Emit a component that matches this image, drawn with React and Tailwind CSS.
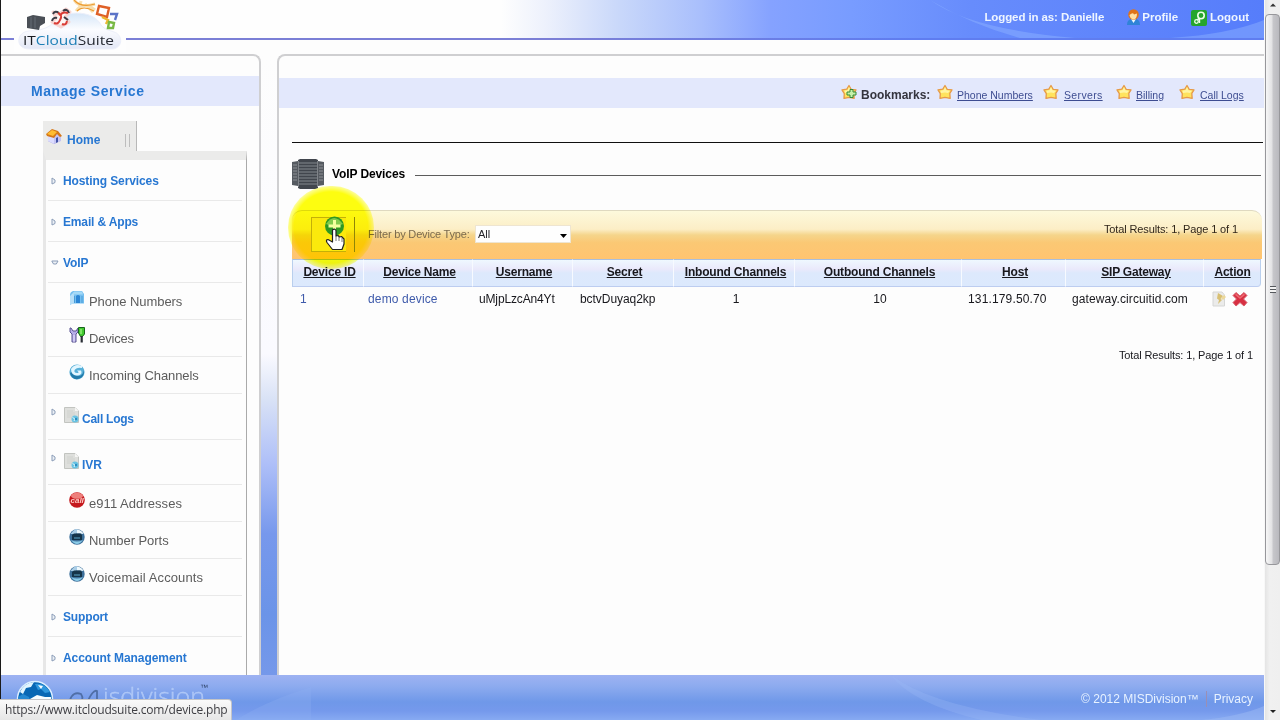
import React from "react";

const menuItems = [
  { label: "Hosting Services", type: "section", height: "h-[41px]", text: "tracking-[-0.1px]" },
  { label: "Email & Apps", type: "section", height: "h-[41px]", text: "tracking-[-0.15px]" },
  { label: "VoIP", type: "section", open: true, height: "h-[41px]", text: "tracking-[-0.1px]" },
  { label: "Phone Numbers", type: "link", icon: "phone", height: "h-[37px]", text: "tracking-[-0.05px]" },
  { label: "Devices", type: "link", icon: "tools", height: "h-[37px]", text: "tracking-[-0.2px]" },
  { label: "Incoming Channels", type: "link", icon: "swirl", height: "h-[37px]", text: "tracking-[-0.1px]" },
  { label: "Call Logs", type: "doc", height: "h-[46px]", text: "tracking-[-0.25px]" },
  { label: "IVR", type: "doc", height: "h-[45px]", text: "tracking-[-0.1px]" },
  { label: "e911 Addresses", type: "link", icon: "call", height: "h-[37px]", text: "tracking-[0.05px]" },
  { label: "Number Ports", type: "link", icon: "port", height: "h-[37px]", text: "tracking-[-0.05px]" },
  { label: "Voicemail Accounts", type: "link", icon: "port", height: "h-[37px]", text: "tracking-[0.12px]" },
  { label: "Support", type: "section", height: "h-[41px]", text: "tracking-[-0.15px]" },
  { label: "Account Management", type: "section", height: "h-[41px]", text: "tracking-[-0.05px]" },
];

const columns = [
  { label: "Device ID", width: "w-[72px]" },
  { label: "Device Name", width: "w-[109px]" },
  { label: "Username", width: "w-[100px]" },
  { label: "Secret", width: "w-[101px]" },
  { label: "Inbound Channels", width: "w-[121px]" },
  { label: "Outbound Channels", width: "w-[167px]" },
  { label: "Host", width: "w-[104px]" },
  { label: "SIP Gateway", width: "w-[138px]" },
  { label: "Action", width: "w-[57px]" },
];

const devices = [
  {
    id: "1",
    name: "demo device",
    username: "uMjpLzcAn4Yt",
    secret: "bctvDuyaq2kp",
    inbound: "1",
    outbound: "10",
    host: "131.179.50.70",
    gateway: "gateway.circuitid.com",
  },
];

function Logo() {
  return (
    <svg width="110" height="52" viewBox="0 0 110 52" className="block">
      <defs>
        <linearGradient id="cloud" x1="0" y1="0" x2="0" y2="1">
          <stop offset="0" stopColor="#d5e6f8" />
          <stop offset="0.45" stopColor="#fbfcff" />
          <stop offset="1" stopColor="#e3e7f5" />
        </linearGradient>
      </defs>
      <path
        d="M14 49C5 49 2 44 3 39C4 33 10 30 19 31C27 29 32 28 37 23C43 11 77 8 85 25C89 30 93 30 98 32C106 34 108 47 97 49Z"
        fill="url(#cloud)"
        stroke="#eceffa"
      />
      {/* server */}
      <path d="M11 17L17 15L29 17V23L24 26L23 30L11 28Z" fill="#4a4f56" />
      <path d="M15 17V28M19 17V28" stroke="#656c74" />
      {/* red knot */}
      <path
        d="M37 12L43 14L50 9L54 12L49 17L53 22L45 27L36 22L40 18Z"
        fill="#fdf5f3"
        stroke="#f7d5d2"
        strokeWidth="3"
        strokeLinejoin="round"
      />
      <path d="M37 14Q39 10 43 13M47 11Q51 8 53 13M36 21Q37 17 41 18M48 17L52 20" fill="none" stroke="#3b3c46" strokeWidth="2" />
      <path d="M42 13Q47 15 44 20Q42 25 38 23M52 13Q46 11 44 16M51 21Q50 26 46 24" fill="none" stroke="#d93c35" strokeWidth="2" />
      {/* ribbon */}
      <path d="M58 0Q64 9 79 4M60 11Q67 1 79 10M65 1L63 10M69 4L77 12" fill="none" stroke="#f8dfae" strokeWidth="3" />
      <path d="M58 0Q65 8 79 4M61 11Q67 5 78 11" fill="none" stroke="#ed9b32" strokeWidth="1.2" />
      {/* office squares */}
      <g fill="none" strokeWidth="2.4">
        <path d="M83 6L93 8L91 17L81 14Z" stroke="#df6026" />
        <path d="M94 14L101 14L99 20" stroke="#5c73c7" />
        <path d="M86 17L92 20L90 24" stroke="#edb832" />
        <path d="M92 28L93 22L98 23L97 28Z" stroke="#79b944" />
      </g>
      <text x="7" y="45" fontFamily="Open Sans, sans-serif" fontSize="13.5" textLength="91" lengthAdjust="spacingAndGlyphs">
        <tspan fill="#171a20">IT</tspan>
        <tspan fill="#1d7fb6">Cloud</tspan>
        <tspan fill="#262a33">Suite</tspan>
      </text>
    </svg>
  );
}

function HomeIcon() {
  return (
    <svg width="16" height="17" viewBox="0 0 16 17">
      <path d="M2 7V13L8 16L14 13V7L9 4Z" fill="#8f8bd6" />
      <path d="M2 8V13L8 16V9Z" fill="#dcdcff" />
      <path d="M8 9L11 5L15 8V13L8 16Z" fill="#c5c4f2" />
      <path d="M0 6L6 1L12 3L16 8L14 9L11 6L8 10L1 8Z" fill="#d57717" />
      <path d="M1 6L6 2L11 4L7 8Z" fill="#ffbd32" />
      <path d="M10 10L12 9V14L10 15Z" fill="#4253a5" />
    </svg>
  );
}

function Star({ plus }) {
  return (
    <svg width="17" height="17" viewBox="0 0 17 17" className="-mt-px shrink-0">
      <path
        d="M8 1.5L10.2 5.3L15 5.8L12.8 9.3L13.2 14.4L8 13.4L3 14.4L3.3 9.7L1 5.8L5.8 5.1Z"
        fill="#ffe35d"
        stroke="#e69a49"
        strokeWidth="1.3"
        strokeLinejoin="round"
      />
      <path d="M8 3L9.5 6.2L13 6.8L11 9L8 8.5L4 9L3.5 6.8L6.7 6Z" fill="#fff5a4" />
      {plus && (
        <path d="M9 5.5H12V8H15V11H12V13.5H9V11H6V8H9Z" fill="#c6f0a8" stroke="#328b38" />
      )}
    </svg>
  );
}

function MenuIcon({ name }) {
  if (name === "phone")
    return (
      <svg width="16" height="16" viewBox="0 0 16 16">
        <path d="M1 5Q1 2 4 1H13L15 4V13.5H3L1 15Z" fill="#75bff0" />
        <path d="M3 4L5 2V13L1 15V6Z" fill="#b7dff8" />
        <path d="M7 6Q9 4 11 6V13H7Z" fill="#2d86d5" />
        <path d="M5 1.5H13L14 4.5H4Z" fill="#a4d9f7" />
        <path d="M5.5 6V13M13 6V13" stroke="#4a9dd8" />
      </svg>
    );
  if (name === "tools")
    return (
      <svg width="16" height="16" viewBox="0 0 16 16">
        <path d="M1 1V5L3 7V15H7V7L9 5V1L7 4H4L2 1Z" fill="#b6ade8" stroke="#5a5592" />
        <path d="M5 8V15" stroke="#e8e4ff" />
        <path d="M9.5 .5H15.5V7L13.5 9.5H11.5L9.5 6Z" fill="#42c92f" stroke="#18651d" />
        <path d="M12.7 9V15.5" stroke="#292d35" strokeWidth="2.2" />
        <path d="M12 2V7" stroke="#b9ff9c" />
      </svg>
    );
  if (name === "swirl")
    return (
      <svg width="16" height="16" viewBox="0 0 16 16">
        <circle cx="8" cy="8" r="7.6" fill="#58b0d8" />
        <path d="M1 9Q3 16 9 15Q16 13 15 6Q14 12 9 12Q4 12 3 8Z" fill="#237baa" />
        <path d="M13 2Q6 -1 2 5Q2 11 8 11.5Q14 11 12 6.5H8Q11 9 8 9Q4 8.5 6 5.5Q8 3 13 4Z" fill="#e2f6ff" />
      </svg>
    );
  if (name === "call")
    return (
      <svg width="16" height="16" viewBox="0 0 16 16">
        <circle cx="8" cy="8" r="7.8" fill="#c4181d" />
        <ellipse cx="8" cy="3.8" rx="6" ry="3" fill="#ee7f7b" />
        <text x="1.5" y="11" fontFamily="Liberation Sans, sans-serif" fontSize="8" fontWeight="bold" fontStyle="italic" fill="#ffc8c3">
          call
        </text>
      </svg>
    );
  return (
    <svg width="16" height="16" viewBox="0 0 16 16">
      <circle cx="8" cy="8" r="7.7" fill="#3c6f9a" />
      <path d="M1.5 5Q7-2 9 1V4L6 5Z" fill="#a9cde6" />
      <path d="M8 .8Q13 1 14.5 5L11 4.5H8Z" fill="#edf8fd" />
      <path d="M2 11Q8 19 14 11Q8 14 2 11Z" fill="#8acbe8" />
      <path d="M3 6L5 4.5H11.5L13 6V11H3Z" fill="#153449" />
      <path d="M5 9H11" stroke="#5fa5c8" />
    </svg>
  );
}

function DocIcon() {
  return (
    <svg width="16" height="16" viewBox="0 0 16 16">
      <path d="M.5.5H11L14.5 4V15.5H.5Z" fill="#dedfdc" stroke="#c2c4c0" />
      <path d="M11 .5V4H14.5" fill="#f6f6f4" />
      <path d="M3 4H9M3 6H11M3 8H11M3 10H8" stroke="#d0d2ce" />
      <circle cx="11" cy="12" r="3.5" fill="#69c3e3" />
      <path d="M8.5 10.5L11 12L10 14" fill="none" stroke="#def6fa" />
      <circle cx="12" cy="12" r="1.2" fill="#2a8cc0" />
    </svg>
  );
}

function Arrow({ open }) {
  return (
    <svg width="8" height="8" viewBox="0 0 8 8" className="shrink-0">
      <path d={open ? "M.8 2H7L5.3 5H2.5Z" : "M1 1L4 3V5.5L1 7Z"} fill="#edf1f6" stroke="#8b9db8" />
    </svg>
  );
}

function MenuItem({ item }) {
  return (
    <li className={`${item.height} mx-[2px] shrink-0 border-b border-[#e9e9e9]`}>
      {item.type === "section" && (
        <div className="flex h-full items-center gap-[4px] pl-[3px] pt-[2px]">
          <Arrow open={item.open} />
          <a className={`${item.text} text-[12px] font-bold text-[#2777d2]`}>{item.label}</a>
        </div>
      )}
      {item.type === "link" && (
        <div className="flex h-full items-start gap-[4px] pl-[21px] pt-[7px]">
          <MenuIcon name={item.icon} />
          <a className={`${item.text} pt-[4px] text-[13px] leading-[16px] text-[#5c5c5c]`}>{item.label}</a>
        </div>
      )}
      {item.type === "doc" && (
        <div className="flex h-full items-start pl-[3px] pt-[14px]">
          <Arrow />
          <span className="-mt-px ml-[5px]">
            <DocIcon />
          </span>
          <a className={`${item.text} ml-[2px] pt-[3px] text-[12px] leading-[16px] font-bold text-[#2777d2]`}>{item.label}</a>
        </div>
      )}
    </li>
  );
}

function Header() {
  return (
    <header className="relative flex h-10 shrink-0 justify-end border-b-2 border-[#7b7fd6] bg-[linear-gradient(90deg,#fefefe_500px,#edf1fc_545px,#c8d7fa_620px,#a9bffc_700px,#85a2ff_770px,#789cff_850px,#678cfc_970px,#567dfb_1264px)]">
      {/* The line turns bluer under the coloured part */}
      <div className="absolute -bottom-[2px] right-0 h-[2px] w-[700px] bg-[linear-gradient(90deg,transparent,#5f7df0_50%)]" />
      <svg width="364" height="38" viewBox="0 0 364 38" className="absolute right-0 top-0">
        <path d="M30 0Q70 29 175 38H120Q72 25 30 0Z" fill="#83a7ff" opacity=".65" />
        <path d="M270 38Q330 34 364 20V38Z" fill="#82a7ff" opacity=".6" />
      </svg>
      {/* Logo hangs below the header line */}
      <div className="absolute left-[13px] top-0 z-10 w-[112px] bg-[#fefefe] pl-[2px]">
        <Logo />
      </div>
      <nav className="relative flex h-[35px] items-center pr-[15px] text-[11.5px] font-bold text-[#eef5ff]">
        <span className="mr-[22px] tracking-[-0.1px]">Logged in as: Danielle</span>
        <svg width="15" height="17" viewBox="0 0 15 17" className="mr-px">
          <path d="M1 16Q1 11 5 10H10Q14 11 14 16Z" fill="#2f83d7" />
          <path d="M5 10H10L7.5 14Z" fill="#eff8ff" />
          <circle cx="7.5" cy="5.5" r="5.3" fill="#e0731a" />
          <path d="M3.5 6Q7 3 8 5.5L11 4.5Q11 10.5 7 10.5Q4 9.5 3.5 6Z" fill="#ffe0a4" />
        </svg>
        <a className="mr-[13px]">Profile</a>
        <svg width="16" height="16" viewBox="0 0 16 16" className="mr-[3px]">
          <rect width="16" height="16" rx="2" fill="#25a52c" />
          <circle cx="10" cy="5.5" r="3.2" fill="none" stroke="#edffe7" strokeWidth="1.6" />
          <circle cx="5.5" cy="11.5" r="1.8" fill="none" stroke="#edffe7" strokeWidth="1.3" />
          <path d="M8 8L6.5 10M8.5 9V13" stroke="#edffe7" strokeWidth="1.4" />
        </svg>
        <a>Logout</a>
      </nav>
    </header>
  );
}

function Sidebar() {
  return (
    <aside className="flex w-[260px] shrink-0 flex-col overflow-hidden rounded-tr-lg border-r-2 border-t-2 border-[#cfcfd1] bg-[#fdfdfd]">
      <h2 className="mt-[20px] flex h-[30px] shrink-0 items-center bg-[#e3e8fc] pl-[30px] text-[14px] font-bold tracking-[0.55px] text-[#2777d2]">
        Manage Service
      </h2>
      <div className="ml-[42px] mt-[15px] flex h-[31px] w-[94px] shrink-0 items-center border-r border-[#b8b8b8] bg-[#ebebea] pl-[3px]">
        <HomeIcon />
        <a className="ml-[5px] mt-[6px] text-[12px] font-bold text-[#2777d2]">Home</a>
        <span className="ml-auto mr-[6px] mt-[7px] h-[13px] w-[5px] border-x border-[#bdbdbd]" />
      </div>
      <ul className="-mt-px ml-[42px] w-[204px] shrink-0 border-l-[3px] border-r border-t-[9px] border-l-[#e7e7e7] border-r-[#aaaaaa] border-t-[#ebebea] pr-[2px]">
        {menuItems.map((item) => (
          <MenuItem key={item.label} item={item} />
        ))}
      </ul>
    </aside>
  );
}

function Bookmarks() {
  return (
    <div className="mt-[22px] flex h-[30px] shrink-0 items-center bg-[#e3e8fc] pl-[562px] text-[10.5px] text-[#3e4d91]">
      <Star plus />
      <span className="ml-[3px] mt-[3px] w-[76px] text-[12px] font-bold text-[#34343e]">Bookmarks:</span>
      <Star />
      <a className="ml-[3px] mt-[5px] w-[86px] underline">Phone Numbers</a>
      <Star />
      <a className="ml-[4px] mt-[5px] w-[52px] tracking-[0.35px] underline">Servers</a>
      <Star />
      <a className="ml-[3px] mt-[5px] w-[43px] underline">Billing</a>
      <Star />
      <a className="ml-[4px] mt-[5px] whitespace-nowrap underline">Call Logs</a>
    </div>
  );
}

function Toolbar() {
  return (
    <div className="relative mt-[20px] flex h-[49px] w-[970px] shrink-0 rounded-t-[10px] border-t border-[#dfd9c0] bg-[linear-gradient(180deg,#fdf9dc_0%,#fceec6_38%,#f5d58b_50%,#fbc874_66%,#ffc470_100%)]">
      <button className="ml-[19px] mt-[6px] h-[35px] w-[35px] border border-r-0 border-[#c4b078] bg-[#fbe9b4]" />
      <span className="ml-[8px] mt-[6px] h-[35px] w-px bg-[#8f866f]" />
      <label className="ml-[13px] mt-[15px] w-[107px] whitespace-nowrap text-[11px] leading-[16px] tracking-[-0.18px] text-[#7b6a4d]">
        Filter by Device Type:
      </label>
      <div className="mt-[14px] flex h-[18px] w-[96px] items-center justify-between border border-[#eee5d1] bg-[#fefefe] pl-[2px] pr-[3px] text-[11px] text-[#24242a]">
        All
        <svg width="7" height="4" viewBox="0 0 7 4" className="mt-[3px]">
          <path d="M0 0H7L3.5 4Z" fill="#000" />
        </svg>
      </div>
      <span className="ml-auto mr-[24px] mt-[10px] text-[11px] leading-[16px] tracking-[-0.12px] text-[#30261a]">
        Total Results: 1, Page 1 of 1
      </span>

      {/* Click highlight and cursor */}
      <div className="absolute -left-[4px] -top-[25px] z-10 h-[83px] w-[86px] rounded-full bg-[radial-gradient(closest-side,#ffff10_86%,#ffff9a_100%)] mix-blend-multiply" />
      <svg width="34" height="40" viewBox="0 0 34 40" className="absolute left-[30px] top-[4px] z-20">
        <circle cx="12.5" cy="11" r="9.5" fill="#2e9822" />
        <path d="M4 9Q12-3 21 9Q13 13 4 9Z" fill="#82cb4b" />
        <path d="M12.5 5V17M6.5 11H18.5" stroke="#f2ff9d" strokeWidth="3" />
        <path
          d="M10.5 15Q12.5 13 14 15.5V21L16 20.5L17.5 22L19.5 21.5L21 23L22 24V29L20 34.5H10.5L5 27.5Q3.5 24.5 6 24.5L10.5 27Z"
          fill="#fff"
          stroke="#222"
          strokeWidth="1.2"
          strokeLinejoin="round"
        />
        <path d="M14 21V26M17 22V26M20 23V27" stroke="#555" strokeWidth=".8" />
      </svg>
    </div>
  );
}

function DeviceTable() {
  return (
    <table className="w-[969px] shrink-0 table-fixed border-separate border-spacing-0 text-[12px] text-[#18181d]">
      <thead>
        <tr className="h-[28px]">
          {columns.map((col) => (
            <th
              key={col.label}
              className={`${col.width} whitespace-nowrap border-b border-t border-b-[#bdcdf0] border-t-[#a9bedc] border-r border-r-[#f7faff] bg-[linear-gradient(180deg,#eff8ff_0%,#eae9fb_35%,#dde9fc_50%,#dce9fd_100%)] p-0 pb-[2px] pl-[3px] text-center font-bold leading-[16px] tracking-[-0.2px] underline first:border-l first:border-l-[#b9cfed] last:rounded-br last:border-r-[#b9cfed] last:pl-[1px]`}
            >
              {col.label}
            </th>
          ))}
        </tr>
      </thead>
      <tbody>
        {devices.map((d) => (
          <tr key={d.id} className="h-[24px]">
            <td className="pl-[8px] text-[#3f5bab]">{d.id}</td>
            <td className="pl-[4px] tracking-[0.15px] text-[#3f5bab]">{d.name}</td>
            <td className="pl-[6px] tracking-[-0.15px]">{d.username}</td>
            <td className="pl-[7px] tracking-[-0.05px]">{d.secret}</td>
            <td className="pl-[3px] text-center">{d.inbound}</td>
            <td className="pl-[3px] text-center">{d.outbound}</td>
            <td className="pl-[6px] tracking-[0.15px]">{d.host}</td>
            <td className="whitespace-nowrap pl-[6px] tracking-[0.1px]">{d.gateway}</td>
            <td>
              <div className="flex items-center gap-[5px] pl-[7px]">
                <svg width="16" height="16" viewBox="0 0 16 16">
                  <path d="M2 1H11L13.5 4V15H2Z" fill="#ebebea" stroke="#d5d6d5" />
                  <path d="M7 2L12 5L9.5 8L11 9L7 13L8 9L6 7.5Z" fill="#d8bf72" />
                  <path d="M10 7L13 4L15 6L12 9Z" fill="#ecd89a" />
                </svg>
                <svg width="16" height="16" viewBox="0 0 16 16">
                  <path d="M4 1.5L8 5L12 1.5L15 4.5L11.5 8L15 11.5L12 15L8 11.5L4 15L1 11.5L4.5 8L1 4.5Z" fill="#d72f42" stroke="#d9606c" />
                  <path d="M4 2.5L8 6L12 2.5L13 4L8 8L3 4Z" fill="#ee6870" />
                </svg>
              </div>
            </td>
          </tr>
        ))}
      </tbody>
    </table>
  );
}

function Content() {
  return (
    <main className="flex flex-1 flex-col overflow-hidden rounded-tl-lg border-l-2 border-t-2 border-[#cfcfd1] bg-[#fdfdfd]">
      <Bookmarks />
      <div className="ml-[13px] mr-px mt-[34px] h-px shrink-0 bg-[#101010]" />
      <div className="ml-[13px] mt-[15px] flex h-[32px] shrink-0 items-center">
        <svg width="32" height="32" viewBox="0 0 32 32">
          <path d="M0 4L6 3V28L0 27ZM32 4L26 3V28L32 27Z" fill="#565b61" />
          <path d="M6 2L8 1H24L26 2V30L23 31H8L6 30Z" fill="#41464d" />
          <path d="M7 5H25M7 8H25M7 11H25M7 14H25M7 17H25M7 20H25M7 23H25M7 26H25" stroke="#83888e" />
          <path d="M1 7H5M1 10H5M1 13H5M1 16H5M1 19H5M1 22H5M27 7H31M27 10H31M27 13H31M27 16H31M27 19H31M27 22H31" stroke="#8d9196" />
          <path d="M6.5 3V29M25.5 3V29" stroke="#7f8388" />
        </svg>
        <h1 className="ml-[8px] w-[83px] whitespace-nowrap text-[12px] font-bold tracking-[-0.1px] text-black">VoIP Devices</h1>
        <span className="mr-[3px] mt-[2px] h-px flex-1 bg-[#5c5c5c]" />
      </div>
      <div className="flex flex-col pl-[13px]">
        <Toolbar />
        <DeviceTable />
        <p className="mt-[36px] pr-[11px] text-right text-[11px] leading-[16px] tracking-[-0.12px] text-[#18181d]">
          Total Results: 1, Page 1 of 1
        </p>
      </div>
    </main>
  );
}

function Footer() {
  return (
    <footer className="relative flex h-[45px] shrink-0 items-center justify-end bg-[linear-gradient(180deg,#9eb2f2_0%,#8dabef_25%,#6f98e9_60%,#7599ec_80%,#87aaf2_100%)] pt-[3px] pr-[11px] text-[12px] text-[#e8f2ff]">
      <svg width="1263" height="45" viewBox="0 0 1263 45" className="absolute left-0 top-0">
        <path d="M235 45Q265 26 310 12V45Z" fill="#8fb0f3" opacity=".3" />
        <path d="M890 0Q930 31 1040 45H980Q910 28 890 0Z" fill="#9bb9f4" opacity=".3" />
        <path d="M1200 45Q1240 41 1263 31V45Z" fill="#9bb9f4" opacity=".5" />
        {/* globe */}
        <circle cx="34" cy="24" r="17.5" fill="#0867b4" stroke="#dceeff" strokeWidth="1.5" />
        <path d="M19 17Q23 8 33 7L30 12L25 13L22 19Z" fill="#e1f5ff" />
        <path d="M34 9Q43 7 49 17L44 18L40 14L37 15Z" fill="#2f97dd" />
        <path d="M17 22L22 19L28 22L30 28L24 34L18 28Z" fill="#2488d2" />
        <path d="M24 31L29 24L36 20L44 22L50 22V34H24Z" fill="#f6fcff" />
        <path d="M37 10L42 11L40 14Z" fill="#f6fcff" />
        {/* wordmark */}
        <path d="M69 25Q72 16 80 19Q84 25 77 28M86 28Q92 14 96 16V28" fill="none" stroke="#4f6ea6" strokeWidth="1.8" />
        <text x="102" y="30" fontFamily="Open Sans, sans-serif" fontSize="23" fontWeight="300" textLength="102" lengthAdjust="spacingAndGlyphs" fill="#a9c3f6" stroke="#b9cff8" strokeWidth=".3">
          isdivision
        </text>
        <text x="199" y="15" fontFamily="Liberation Sans, sans-serif" fontSize="8" fill="#31466c">™</text>
      </svg>
      <div className="relative flex items-center">
        <span>© 2012 MISDivision™</span>
        <span className="mx-[7px] h-[16px] w-px bg-[#9a8fb4]" />
        <a>Privacy</a>
      </div>
    </footer>
  );
}

function Scrollbar() {
  return (
    <div className="flex w-4 shrink-0 flex-col items-center border-l border-[#f8f8f8] bg-[linear-gradient(90deg,#e4e4e4,#f0f0f0_30%,#efefef)]">
      <svg width="15" height="14" viewBox="0 0 15 14">
        <path d="M5 6.5L8 3.5L11 6.5Z" fill="#333" />
      </svg>
      <div className="flex h-[551px] w-full items-center justify-center rounded-sm border border-[#97979b] bg-[linear-gradient(90deg,#f7f7f7,#e2e2e4_45%,#c6c6ca_55%,#b9b9be)]">
        <span className="h-[7px] w-[6px] bg-[repeating-linear-gradient(180deg,#55585d_0_1px,#f3f3f3_1px_3px)]" />
      </div>
      <svg width="15" height="9" viewBox="0 0 15 9" className="mb-[4px] mt-auto">
        <path d="M5 3L11 3L8 6Z" fill="#222" />
      </svg>
    </div>
  );
}

export default function App() {
  return (
    <div className="relative flex h-[720px] w-[1280px] overflow-hidden bg-[#fdfdfd] font-['Liberation_Sans',Arial,sans-serif]">
      <div className="flex w-[1264px] shrink-0 flex-col border-l border-[#1a1a1a]">
        <Header />
        <div className="mt-[14px] flex min-h-0 flex-1">
          <Sidebar />
          {/* Gutter between the two panels */}
          <div className="w-[16px] shrink-0 bg-[linear-gradient(180deg,#fdfdfd_0px,#fafaff_300px,#d9e2f6_345px,#aebff8_410px,#7798ec_480px,#6b94e8_560px,#7598ea_621px)]" />
          <Content />
        </div>
        <Footer />
      </div>
      <Scrollbar />
      {/* Browser status bubble */}
      <div className="absolute bottom-0 left-0 z-30 flex h-[21px] w-[232px] items-center rounded-tr-sm border-r border-t border-[#c5c5c8] bg-[linear-gradient(180deg,#fafafa,#e6e6e6)] pl-[5px] font-['Open_Sans',sans-serif] text-[12px] tracking-[-0.18px] text-[#3e3e43]">
        https://www.itcloudsuite.com/device.php
      </div>
    </div>
  );
}
